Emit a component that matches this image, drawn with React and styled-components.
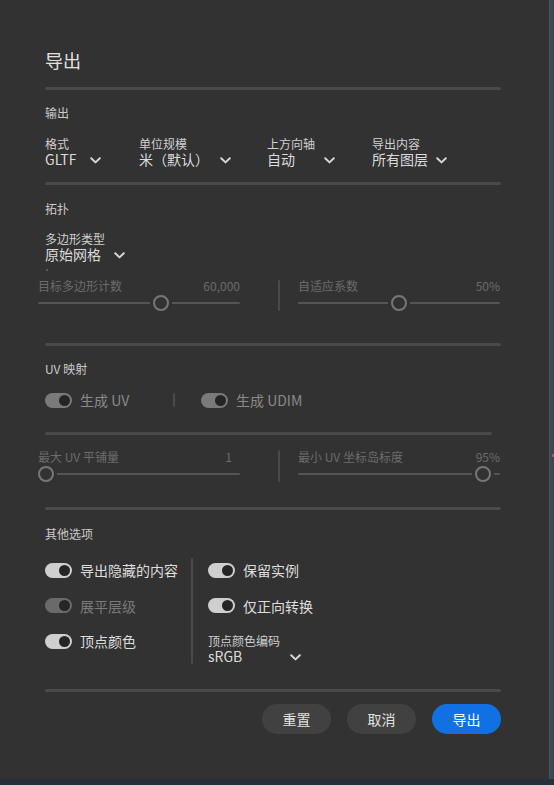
import React from 'react';
import styled, { createGlobalStyle } from 'styled-components';

const Global = createGlobalStyle`
  html, body { margin: 0; padding: 0; background: #25303a; }
  body { font-family: "Noto Sans CJK SC", "Noto Sans", sans-serif; }
  * { box-sizing: border-box; }
`;

const Screen = styled.div`
  width: 554px;
  height: 785px;
  display: flex;
  flex-direction: column;
  background: #25303a;
`;

const Upper = styled.div`
  display: flex;
  height: 779px;
`;

const EdgeStrip = styled.div`
  flex: 1;
  position: relative;
  background: linear-gradient(90deg, #4a5866 0, #3a4856 2px, #3a4856 100%);
`;

const EdgeMark = styled.span`
  position: absolute;
  left: 3px;
  top: 454px;
  width: 3px;
  height: 3px;
  border-radius: 1px;
  background: #c2467a;
`;

const Dialog = styled.div`
  width: 549px;
  height: 779px;
  background: #323232;
  padding: 48px 48px 0 45px;
  display: flex;
  flex-direction: column;
`;

const Title = styled.h1`
  margin: 0;
  font-size: 18px;
  line-height: 24px;
  font-weight: 400;
  color: #e2e2e2;
`;

const Rule = styled.div`
  flex: none;
  height: 3px;
  border-radius: 2px;
  background: #4a4a4a;
  margin-top: ${p => p.$mt}px;
  margin-right: ${p => p.$mr || 0}px;
`;

const SectionTitle = styled.div`
  font-size: 12px;
  line-height: 16px;
  color: #cbcbcb;
  margin-top: ${p => p.$mt}px;
`;

const DropRow = styled.div`
  display: flex;
  margin-top: ${p => p.$mt}px;
`;

const DropField = styled.div`
  width: ${p => (p.$w ? `${p.$w}px` : 'auto')};
  display: flex;
  flex-direction: column;
  margin-top: ${p => p.$mt || 0}px;
`;

const FieldLabel = styled.div`
  font-size: 12px;
  line-height: 13px;
  height: 13px;
  color: #d0d0d0;
  white-space: nowrap;
`;

const FieldValue = styled.div`
  display: flex;
  align-items: center;
  margin-top: 2px;
  font-size: 14px;
  line-height: 15px;
  color: #dcdcdc;
  white-space: nowrap;
`;

const ChevronSvg = styled.svg`
  flex: none;
  margin-left: ${p => p.$gap}px;
  margin-top: 2px;
`;

const Chevron = ({ gap }) => (
  <ChevronSvg $gap={gap} width="11" height="7" viewBox="0 0 11 7">
    <path d="M1.2 1.2 L5.5 5.4 L9.8 1.2" fill="none" stroke="#d6d6d6" strokeWidth="2" strokeLinecap="round" strokeLinejoin="round" />
  </ChevronSvg>
);

const Dot = styled.div`
  width: 2px;
  height: 2px;
  margin: 7px 0 0 1px;
  background: #5c5c5c;
`;

const SliderPair = styled.div`
  display: flex;
  align-items: flex-start;
  margin-left: -7px;
  margin-top: ${p => p.$mt}px;
`;

const SliderBox = styled.div`
  width: 202px;
  flex: none;
`;

const SliderHead = styled.div`
  display: flex;
  justify-content: space-between;
  font-size: 12px;
  line-height: 14px;
  color: #6c6c6c;
  padding-right: ${p => p.$pr || 0}px;
  white-space: nowrap;
`;

const Track = styled.div`
  position: relative;
  height: 16px;
  margin-top: 2px;
  &::before {
    content: '';
    position: absolute;
    left: 0;
    right: 0;
    top: 7px;
    height: 2px;
    border-radius: 1px;
    background: #555555;
  }
`;

const Thumb = styled.div`
  position: absolute;
  top: 0;
  width: 16px;
  height: 16px;
  border-radius: 50%;
  border: 2px solid #777777;
  background: #323232;
  box-shadow: 0 0 0 3px #323232;
`;

const VRule = styled.div`
  flex: none;
  width: 2px;
  height: ${p => p.$h}px;
  background: #4a4a4a;
  border-radius: 1px;
  margin: ${p => p.$top || 0}px ${p => p.$r || 0}px 0 ${p => p.$l || 0}px;
`;

const Slider = ({ label, value, pct, pr }) => (
  <SliderBox>
    <SliderHead $pr={pr}>
      <span>{label}</span>
      <span>{value}</span>
    </SliderHead>
    <Track>
      <Thumb style={{ left: `${(pct / 100) * 186}px` }} />
    </Track>
  </SliderBox>
);

const ToggleRow = styled.div`
  display: flex;
  align-items: center;
  height: 20px;
  width: ${p => (p.$w ? `${p.$w}px` : 'auto')};
  flex: none;
`;

const Toggle = styled.span`
  position: relative;
  flex: none;
  width: 27px;
  height: 15px;
  border-radius: 8px;
  background: ${p => p.$track};
  &::after {
    content: '';
    position: absolute;
    top: 2px;
    right: 2px;
    width: 11px;
    height: 11px;
    border-radius: 50%;
    background: #252525;
  }
`;

const ToggleLabel = styled.span`
  margin-left: 8px;
  font-size: 14px;
  line-height: 20px;
  color: ${p => p.$color};
  white-space: nowrap;
`;

const UVRow = styled.div`
  display: flex;
  align-items: center;
  margin-top: ${p => p.$mt}px;
`;

const OptionsGrid = styled.div`
  display: flex;
  align-items: flex-start;
  margin-top: 16px;
`;

const OptionCol = styled.div`
  display: flex;
  flex-direction: column;
  gap: 15.5px;
  padding-top: 2px;
  width: ${p => (p.$w ? `${p.$w}px` : 'auto')};
  margin-left: ${p => p.$ml || 0}px;
`;

const ButtonBar = styled.div`
  display: flex;
  justify-content: flex-end;
  gap: 16px;
  margin-top: 12px;
`;

const Button = styled.button`
  width: 69px;
  height: 30px;
  border: none;
  border-radius: 15px;
  padding: 0;
  font-family: inherit;
  font-size: 14px;
  line-height: 30px;
  color: ${p => (p.$primary ? '#ffffff' : '#e2e2e2')};
  background: ${p => (p.$primary ? '#1170e4' : '#414141')};
`;

const ON = '#cfcfcf';
const TEXT = '#dedede';

export default function App() {
  return (
    <>
      <Global />
      <Screen>
        <Upper>
          <Dialog>
            <Title>导出</Title>
            <Rule $mt={15} />

            <SectionTitle $mt={15}>输出</SectionTitle>
            <DropRow $mt={16}>
              <DropField $w={94}>
                <FieldLabel>格式</FieldLabel>
                <FieldValue>GLTF<Chevron gap={13} /></FieldValue>
              </DropField>
              <DropField $w={128}>
                <FieldLabel>单位规模</FieldLabel>
                <FieldValue>米（默认）<Chevron gap={11} /></FieldValue>
              </DropField>
              <DropField $w={105}>
                <FieldLabel>上方向轴</FieldLabel>
                <FieldValue>自动<Chevron gap={29} /></FieldValue>
              </DropField>
              <DropField>
                <FieldLabel>导出内容</FieldLabel>
                <FieldValue>所有图层<Chevron gap={8} /></FieldValue>
              </DropField>
            </DropRow>
            <Rule $mt={15} />

            <SectionTitle $mt={16}>拓扑</SectionTitle>
            <DropRow $mt={15}>
              <DropField>
                <FieldLabel>多边形类型</FieldLabel>
                <FieldValue>原始网格<Chevron gap={13} /></FieldValue>
              </DropField>
            </DropRow>
            <Dot />
            <SliderPair $mt={8}>
              <Slider label="目标多边形计数" value="60,000" pct={62} />
              <VRule $h={31} $top={1} $l={38} $r={18} />
              <Slider label="自适应系数" value="50%" pct={50} />
            </SliderPair>
            <Rule $mt={32} />

            <SectionTitle $mt={15}>UV 映射</SectionTitle>
            <UVRow $mt={13}>
              <ToggleRow $w={128}>
                <Toggle $track="#7a7a7a" />
                <ToggleLabel $color="#8a8a8a">生成 UV</ToggleLabel>
              </ToggleRow>
              <VRule $h={14} $r={26} />
              <ToggleRow>
                <Toggle $track="#7a7a7a" />
                <ToggleLabel $color="#8a8a8a">生成 UDIM</ToggleLabel>
              </ToggleRow>
            </UVRow>
            <Rule $mt={22} $mr={9} />

            <SliderPair $mt={15}>
              <Slider label="最大 UV 平铺量" value="1" pct={0} pr={8} />
              <VRule $h={32} $top={0} $l={38} $r={18} />
              <Slider label="最小 UV 坐标岛标度" value="95%" pct={95} />
            </SliderPair>
            <Rule $mt={25} />

            <SectionTitle $mt={16}>其他选项</SectionTitle>
            <OptionsGrid>
              <OptionCol $w={146}>
                <ToggleRow>
                  <Toggle $track={ON} />
                  <ToggleLabel $color={TEXT}>导出隐藏的内容</ToggleLabel>
                </ToggleRow>
                <ToggleRow>
                  <Toggle $track="#6a6a6a" />
                  <ToggleLabel $color="#7a7a7a">展平层级</ToggleLabel>
                </ToggleRow>
                <ToggleRow>
                  <Toggle $track={ON} />
                  <ToggleLabel $color={TEXT}>顶点颜色</ToggleLabel>
                </ToggleRow>
              </OptionCol>
              <VRule $h={106} />
              <OptionCol $ml={15}>
                <ToggleRow>
                  <Toggle $track={ON} />
                  <ToggleLabel $color={TEXT}>保留实例</ToggleLabel>
                </ToggleRow>
                <ToggleRow>
                  <Toggle $track={ON} />
                  <ToggleLabel $color={TEXT}>仅正向转换</ToggleLabel>
                </ToggleRow>
                <DropField $mt={3}>
                  <FieldLabel>顶点颜色编码</FieldLabel>
                  <FieldValue>sRGB<Chevron gap={48} /></FieldValue>
                </DropField>
              </OptionCol>
            </OptionsGrid>
            <Rule $mt={25} />

            <ButtonBar>
              <Button>重置</Button>
              <Button>取消</Button>
              <Button $primary>导出</Button>
            </ButtonBar>
          </Dialog>
          <EdgeStrip>
            <EdgeMark />
          </EdgeStrip>
        </Upper>
      </Screen>
    </>
  );
}
